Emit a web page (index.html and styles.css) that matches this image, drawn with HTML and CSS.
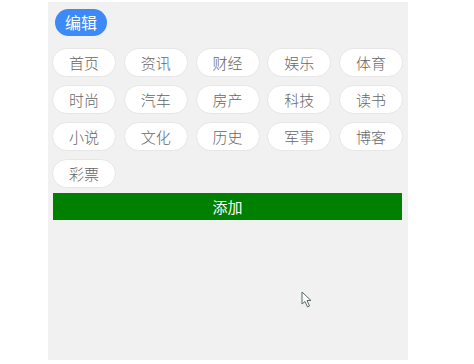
FILE: index.html
```html
<!DOCTYPE html>
<html lang="zh">
<head>
<meta charset="utf-8">
<link rel="stylesheet" href="styles.css">
</head>
<body>
<div class="panel">
  <div class="edit-row"><button class="edit">编辑</button></div>
  <div class="tags">
    <span class="tag">首页</span><span class="tag">资讯</span><span class="tag">财经</span><span class="tag">娱乐</span><span class="tag">体育</span>
    <span class="tag">时尚</span><span class="tag">汽车</span><span class="tag">房产</span><span class="tag">科技</span><span class="tag">读书</span>
    <span class="tag">小说</span><span class="tag">文化</span><span class="tag">历史</span><span class="tag">军事</span><span class="tag">博客</span>
    <span class="tag">彩票</span>
  </div>
  <div class="add">添加</div>
</div>
<svg class="cursor" width="12" height="18" viewBox="0 0 12 18"><path d="M1 1 L1 13 L4 10.5 L6.5 16 L8.5 15 L6 9.5 L10 9.5 Z" fill="#fff" stroke="#5a6a60" stroke-width="1"/></svg>
</body>
</html>
```
FILE: styles.css
```css
html, body {
  margin: 0;
  padding: 0;
  background: #fff;
}
body {
  font-family: "Microsoft YaHei", "Noto Sans CJK SC", sans-serif;
  position: relative;
  width: 474px;
  height: 364px;
}
.panel {
  margin-left: 48px;
  margin-top: 2px;
  width: 360px;
  height: 358px;
  background: #f1f1f1;
  box-sizing: border-box;
  padding-top: 7px;
}
.edit-row {
  padding-left: 7px;
  height: 27px;
}
.edit {
  display: block;
  width: 52px;
  height: 27px;
  border: none;
  border-radius: 14px;
  background: #3d8af7;
  color: #fff;
  font-family: inherit;
  font-size: 16px;
  padding: 0;
  line-height: 27px;
}
.tags {
  display: flex;
  flex-wrap: wrap;
  column-gap: 7.75px;
  row-gap: 8px;
  padding-left: 4px;
  margin-top: 12px;
}
.tag {
  width: 64px;
  height: 29px;
  box-sizing: border-box;
  border: 1px solid #e6e6e6;
  border-radius: 15px;
  background: #fff;
  color: #666;
  font-size: 15px;
  font-weight: 300;
  display: flex;
  align-items: center;
  justify-content: center;
}
.add {
  margin-top: 5px;
  margin-left: 5px;
  width: 349px;
  height: 27px;
  background: #008000;
  color: #fff;
  font-size: 15px;
  display: flex;
  align-items: center;
  justify-content: center;
}
.cursor {
  position: absolute;
  left: 301px;
  top: 291px;
}
```
